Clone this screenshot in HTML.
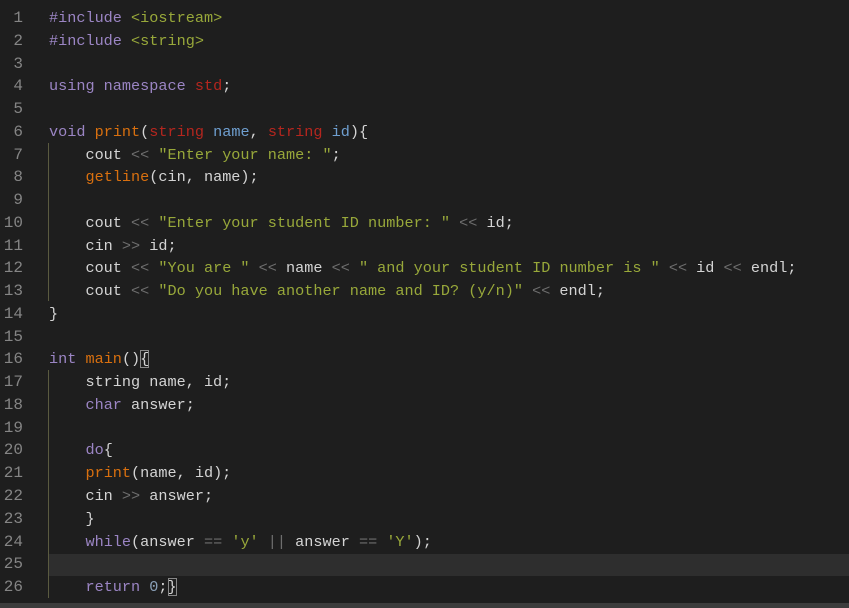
<!DOCTYPE html>
<html><head><style>
html,body{margin:0;padding:0;background:#1e1e1e;width:849px;height:608px;overflow:hidden}
body{position:relative;font-family:"Liberation Mono",monospace;font-size:15.2px;color:#d4d4d4}
.l{position:absolute;left:0;height:22.76px;line-height:22.76px;white-space:pre;width:849px}
.n{position:absolute;right:826px;color:#858585;font-size:16px}
.c{position:absolute;left:49px}
.k{color:#9b85c4}.s{color:#98a83a}.r{color:#b5261e}.f{color:#d9700f}.p{color:#6f9fd0}.o{color:#6e6e6e}.num{color:#8aa0b8}
.hl{position:absolute;left:49px;top:554px;width:800px;height:22px;background:#2e2e2e}
.g{position:absolute;left:48px;width:1px;background:#5a5a40}
.br{outline:1px solid #888;outline-offset:-1px}
.bot{position:absolute;left:0;top:603px;width:849px;height:5px;background:#3c3c3c}
</style></head><body>
<div class="hl"></div>
<div class="g" style="top:143px;height:158px"></div>
<div class="g" style="top:370px;height:228px"></div>
<div class="l" style="top:7px"><span class="n">1</span><span class="c"><span class="k">#include</span> <span class="s">&lt;iostream&gt;</span></span></div>
<div class="l" style="top:29.8px"><span class="n">2</span><span class="c"><span class="k">#include</span> <span class="s">&lt;string&gt;</span></span></div>
<div class="l" style="top:52.5px"><span class="n">3</span></div>
<div class="l" style="top:75.3px"><span class="n">4</span><span class="c"><span class="k">using namespace</span> <span class="r">std</span>;</span></div>
<div class="l" style="top:98px"><span class="n">5</span></div>
<div class="l" style="top:120.8px"><span class="n">6</span><span class="c"><span class="k">void</span> <span class="f">print</span>(<span class="r">string</span> <span class="p">name</span>, <span class="r">string</span> <span class="p">id</span>){</span></div>
<div class="l" style="top:143.6px"><span class="n">7</span><span class="c">    cout <span class="o">&lt;&lt;</span> <span class="s">"Enter your name: "</span>;</span></div>
<div class="l" style="top:166.3px"><span class="n">8</span><span class="c">    <span class="f">getline</span>(cin, name);</span></div>
<div class="l" style="top:189px"><span class="n">9</span></div>
<div class="l" style="top:211.8px"><span class="n">10</span><span class="c">    cout <span class="o">&lt;&lt;</span> <span class="s">"Enter your student ID number: "</span> <span class="o">&lt;&lt;</span> id;</span></div>
<div class="l" style="top:234.6px"><span class="n">11</span><span class="c">    cin <span class="o">&gt;&gt;</span> id;</span></div>
<div class="l" style="top:257.4px"><span class="n">12</span><span class="c">    cout <span class="o">&lt;&lt;</span> <span class="s">"You are "</span> <span class="o">&lt;&lt;</span> name <span class="o">&lt;&lt;</span> <span class="s">" and your student ID number is "</span> <span class="o">&lt;&lt;</span> id <span class="o">&lt;&lt;</span> endl;</span></div>
<div class="l" style="top:280.1px"><span class="n">13</span><span class="c">    cout <span class="o">&lt;&lt;</span> <span class="s">"Do you have another name and ID? (y/n)"</span> <span class="o">&lt;&lt;</span> endl;</span></div>
<div class="l" style="top:302.9px"><span class="n">14</span><span class="c">}</span></div>
<div class="l" style="top:325.6px"><span class="n">15</span></div>
<div class="l" style="top:348.4px"><span class="n">16</span><span class="c"><span class="k">int</span> <span class="f">main</span>()<span class="br">{</span></span></div>
<div class="l" style="top:371.2px"><span class="n">17</span><span class="c">    string name, id;</span></div>
<div class="l" style="top:393.9px"><span class="n">18</span><span class="c">    <span class="k">char</span> answer;</span></div>
<div class="l" style="top:416.7px"><span class="n">19</span></div>
<div class="l" style="top:439.4px"><span class="n">20</span><span class="c">    <span class="k">do</span>{</span></div>
<div class="l" style="top:462.2px"><span class="n">21</span><span class="c">    <span class="f">print</span>(name, id);</span></div>
<div class="l" style="top:485px"><span class="n">22</span><span class="c">    cin <span class="o">&gt;&gt;</span> answer;</span></div>
<div class="l" style="top:507.7px"><span class="n">23</span><span class="c">    }</span></div>
<div class="l" style="top:530.5px"><span class="n">24</span><span class="c">    <span class="k">while</span>(answer <span class="o">==</span> <span class="s">'y'</span> <span class="o">||</span> answer <span class="o">==</span> <span class="s">'Y'</span>);</span></div>
<div class="l" style="top:553.2px"><span class="n">25</span></div>
<div class="l" style="top:576px"><span class="n">26</span><span class="c">    <span class="k">return</span> <span class="num">0</span>;<span class="br">}</span></span></div>
<div class="bot"></div>
</body></html>
